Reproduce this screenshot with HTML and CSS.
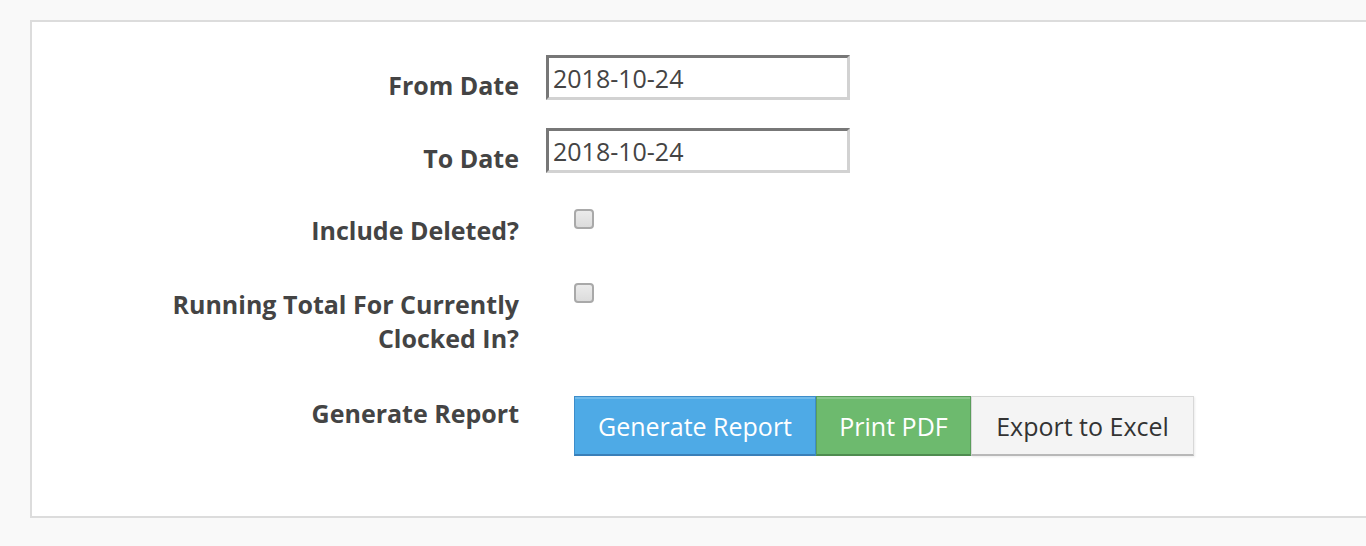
FILE: index.html
```html
<!DOCTYPE html>
<html>
<head>
<meta charset="utf-8">
<link rel="stylesheet" href="styles.css">
</head>
<body>
<div class="page">
  <form class="panel">
    <div class="row row-date first">
      <label class="label" for="from">From Date</label>
      <div class="control"><input id="from" class="date-input" type="text" value="2018-10-24"></div>
    </div>
    <div class="row row-date">
      <label class="label" for="to">To Date</label>
      <div class="control"><input id="to" class="date-input" type="text" value="2018-10-24"></div>
    </div>
    <div class="row row-check">
      <label class="label" for="del">Include Deleted?</label>
      <div class="control check-wrap"><input id="del" class="check" type="checkbox"></div>
    </div>
    <div class="row row-check row-tall">
      <label class="label" for="run">Running Total For Currently Clocked In?</label>
      <div class="control check-wrap"><input id="run" class="check" type="checkbox"></div>
    </div>
    <div class="row row-buttons">
      <div class="label">Generate Report</div>
      <div class="control btn-wrap">
        <div class="btn-group">
          <button type="button" class="btn btn-blue">Generate Report</button>
          <button type="button" class="btn btn-green">Print PDF</button>
          <button type="button" class="btn btn-gray">Export to Excel</button>
        </div>
      </div>
    </div>
  </form>
</div>
</body>
</html>
```

FILE: styles.css
```css
html, body {
  margin: 0;
  padding: 0;
  background: #f9f9f9;
  overflow: hidden;
}

body {
  font-family: "Open Sans", "Liberation Sans", sans-serif;
  color: #444;
}

.page {
  padding: 20px 0 0 30px;
}

.panel {
  margin-right: -40px;
  background: #fff;
  border: 2px solid #dcdcdc;
  padding: 0 0 58px 87px;
  height: 498px;
  box-sizing: border-box;
}

.row {
  display: grid;
  grid-template-columns: 400px 1fr;
  column-gap: 27px;
  align-items: start;
}

.label {
  text-align: right;
  font-weight: 700;
  font-size: 25px;
  line-height: 34px;
  color: #444;
}

.row.first {
  padding-top: 33px;
}

.row-date .label {
  padding-top: 13px;
}

.row-date + .row-date {
  margin-top: 26px;
}

.date-input {
  display: block;
  width: 304px;
  height: 45px;
  box-sizing: border-box;
  margin: 0;
  padding: 0 0 0 4px;
  border-style: solid;
  border-width: 3px;
  border-color: #777 #d2d2d2 #d2d2d2 #777;
  font-family: "Open Sans", "Liberation Sans", sans-serif;
  font-size: 25px;
  color: #444;
  background: #fff;
  outline: none;
}

.row-check {
  margin-top: 34px;
}

.row-check .label {
  padding-top: 4px;
}

.row-tall {
  margin-top: 36px;
}

.check-wrap {
  padding-left: 28px;
}

.check {
  appearance: none;
  -webkit-appearance: none;
  display: block;
  width: 20px;
  height: 20px;
  margin: 0;
  border: 2px solid #a9a9a9;
  border-radius: 4px;
  background: linear-gradient(#ebebeb, #dcdcdc);
  box-sizing: border-box;
}

.row-buttons {
  margin-top: 41px;
}

.btn-wrap {
  padding-left: 28px;
}

.btn-group {
  display: flex;
}

.btn {
  height: 60px;
  margin: 0;
  padding: 0 20px;
  box-sizing: border-box;
  font-family: "Open Sans", "Liberation Sans", sans-serif;
  font-size: 25px;
  border-style: solid;
  border-width: 1px 1px 2px 1px;
  cursor: pointer;
  box-shadow: inset 0 2px 0 rgba(255, 255, 255, 0.2);
}

.btn-blue {
  width: 242px;
  background: #4eaae6;
  border-color: #3d8dca #3d8dca #3a7fb8 #3d8dca;
  color: #fff;
}

.btn-green {
  width: 155px;
  background: #6dba6e;
  border-color: #5a9e5b #5a9e5b #4f8c50 #5a9e5b;
  color: #fff;
}

.btn-gray {
  width: 223px;
  background: #f4f4f4;
  border-color: #d8d8d8 #d8d8d8 #b8b8b8 #d8d8d8;
  color: #333;
  box-shadow: 1px 1px 2px rgba(0, 0, 0, 0.08);
}
```
